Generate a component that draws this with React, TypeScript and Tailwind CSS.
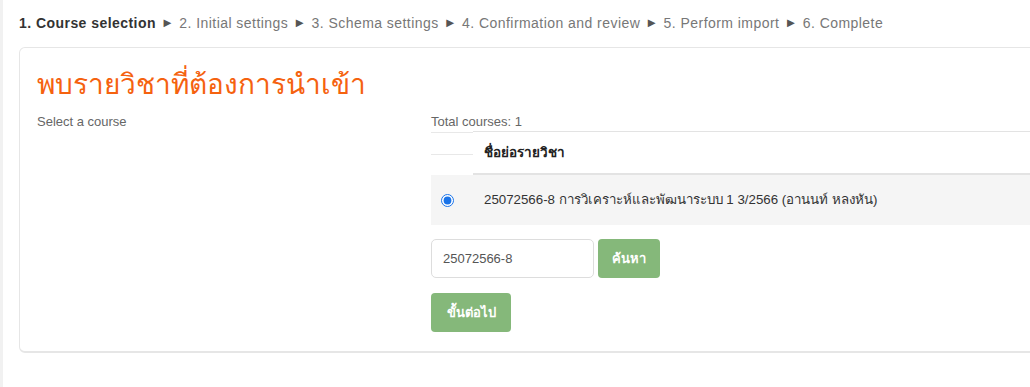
const steps = [
  "1. Course selection",
  "2. Initial settings",
  "3. Schema settings",
  "4. Confirmation and review",
  "5. Perform import",
  "6. Complete",
];

export default function App() {
  return (
    <div
      className="relative h-[387px] w-[1030px] overflow-hidden bg-white text-[13px] text-[#333]"
      style={{ fontFamily: '"Liberation Sans", "Noto Sans", sans-serif' }}
    >
      <div className="absolute left-0 top-0 h-full w-[3px] bg-[#f1f1f1]" />
      <div className="pl-[19px] pt-[14px]">
        {/* breadcrumb of import steps */}
        <div className="flex items-center whitespace-nowrap text-[14px] leading-[18px] tracking-[0.45px] text-[#777]">
          {steps.map((s, i) => (
            <span key={s} className="flex items-center">
              <span className={i === 0 ? "font-bold text-[#333]" : ""}>{s}</span>
              {i < steps.length - 1 && <span className="mx-[5px] text-[13px] text-[#555]">►</span>}
            </span>
          ))}
        </div>

        <div className="mt-[15px] w-[1040px] rounded-[6px] border border-b-2 border-[#e6e6e6] pb-[19px] pl-[17px] pt-[16px]">
          <h2 className="text-[28px] leading-[42px] text-[#f5620f]">พบรายวิชาที่ต้องการนำเข้า</h2>

          <div className="mt-[7px] flex">
            <div className="w-[394px] leading-[17px] text-[#666]">Select a course</div>
            <div className="flex-1">
              <div className="leading-[17px] text-[#666]">Total courses: 1</div>
              <div className="mt-[1px] flex h-[44px]">
                <div className="flex w-[42px] flex-col">
                  <div className="mt-[1px] border-t border-[#e8e8e8]" />
                  <div className="mt-[21px] border-t border-[#e8e8e8]" />
                </div>
                <div className="flex flex-1 items-center border-t border-b-2 border-[#e3e3e3] pl-[11px] pt-[2px] text-[13.5px] font-bold text-[#222]">
                  ชื่อย่อรายวิชา
                </div>
              </div>
              <div className="flex h-[50px] items-center bg-[#f5f5f5]">
                <input type="radio" defaultChecked className="ml-[10px] h-[13px] w-[13px] accent-[#1a73e8]" />
                <span className="ml-[30px] text-[13.3px]">25072566-8 การวิเคราะห์และพัฒนาระบบ 1 3/2566 (อานนท์ หลงหัน)</span>
              </div>

              <div className="mt-[14px] flex gap-[4px]">
                <input
                  defaultValue="25072566-8"
                  className="h-[39px] w-[163px] rounded-[5px] border border-[#ddd] px-[11px] text-[13px] text-[#555] outline-none"
                />
                <button className="h-[39px] w-[62px] rounded-[4px] bg-[#85b87a] font-bold text-white">ค้นหา</button>
              </div>
              <button className="mt-[15px] h-[39px] w-[80px] rounded-[4px] bg-[#85b87a] font-bold text-white">
                ขั้นต่อไป
              </button>
            </div>
          </div>
        </div>
      </div>
    </div>
  );
}
